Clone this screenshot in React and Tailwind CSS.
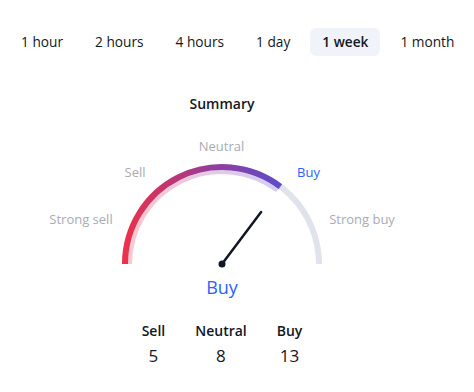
import React from "react";

const tabs = ["1 hour", "2 hours", "4 hours", "1 day", "1 week", "1 month"];

// gauge geometry (svg space)
const cx = 222;
const cy = 143;
const endDeg = 53;

function pt(r, deg) {
  const a = (deg * Math.PI) / 180;
  return [cx + r * Math.cos(a), cy - r * Math.sin(a)];
}

function arc(r, from, to) {
  const [x1, y1] = pt(r, from);
  const [x2, y2] = pt(r, to);
  return `M ${x1} ${y1} A ${r} ${r} 0 0 1 ${x2} ${y2}`;
}

function Gauge() {
  const [nx, ny] = pt(65, endDeg);
  return (
    <div className="relative w-[444px] h-[150px] mt-[7px]">
      <svg className="absolute left-0 top-0" width="444" height="150">
        <defs>
          <linearGradient id="g" gradientUnits="userSpaceOnUse" x1="122" y1="0" x2="282" y2="0">
            <stop offset="0" stopColor="#f0304a" />
            <stop offset="0.3" stopColor="#c03570" />
            <stop offset="0.65" stopColor="#8840a8" />
            <stop offset="1" stopColor="#5d4dc8" />
          </linearGradient>
        </defs>
        <path d={arc(97, 180, 0)} fill="none" stroke="#e0e3eb" strokeWidth="6" />
        <path d={arc(92, 180, endDeg)} fill="none" stroke="url(#g)" strokeOpacity="0.27" strokeWidth="4" />
        <path d={arc(97, 180, endDeg)} fill="none" stroke="url(#g)" strokeWidth="6" />
        <line x1={cx} y1={cy} x2={nx} y2={ny} stroke="#131722" strokeWidth="2.5" strokeLinecap="round" />
        <circle cx={cx} cy={cy} r="3.5" fill="#131722" />
      </svg>
      <span className="absolute left-[81px] top-[99px] -translate-x-1/2 -translate-y-1/2 text-[13px] font-medium text-[#a8abb5] whitespace-nowrap">
        Strong sell
      </span>
      <span className="absolute left-[135px] top-[52px] -translate-x-1/2 -translate-y-1/2 text-[13px] font-medium text-[#a8abb5]">
        Sell
      </span>
      <span className="absolute left-[221.5px] top-[26px] -translate-x-1/2 -translate-y-1/2 text-[13px] font-medium text-[#a8abb5]">
        Neutral
      </span>
      <span className="absolute left-[308.5px] top-[52px] -translate-x-1/2 -translate-y-1/2 text-[13px] font-medium text-[#2962ff]">
        Buy
      </span>
      <span className="absolute left-[362px] top-[99px] -translate-x-1/2 -translate-y-1/2 text-[13px] font-medium text-[#a8abb5] whitespace-nowrap">
        Strong buy
      </span>
    </div>
  );
}

export default function App() {
  return (
    <div className="w-[474px] h-[392px] bg-white text-[#131722] font-['Open_Sans',sans-serif] overflow-hidden">
      {/* interval tabs */}
      <div className="flex items-center gap-2 pl-[9px] pt-[28px]">
        {tabs.map((t) => (
          <div
            key={t}
            className={`h-[28px] px-3 flex items-center rounded-md text-[13.7px] whitespace-nowrap ${
              t === "1 week" ? "bg-[#f0f3fa] font-semibold" : ""
            }`}
          >
            {t}
          </div>
        ))}
      </div>

      <div className="w-[444px] flex flex-col items-center">
        <div className="mt-[38px] text-[14px] leading-5 font-semibold">Summary</div>
        <Gauge />
        <div className="mt-[4px] text-[18px] leading-6 font-medium text-[#2962ff]">Buy</div>
        <div className="mt-[22px] flex gap-[30px]">
          {[
            ["Sell", 5],
            ["Neutral", 8],
            ["Buy", 13],
          ].map(([l, n]) => (
            <div key={l} className="flex flex-col items-center">
              <div className="text-[14px] leading-5 font-semibold">{l}</div>
              <div className="mt-[3px] text-[17px] leading-6">{n}</div>
            </div>
          ))}
        </div>
      </div>
    </div>
  );
}
